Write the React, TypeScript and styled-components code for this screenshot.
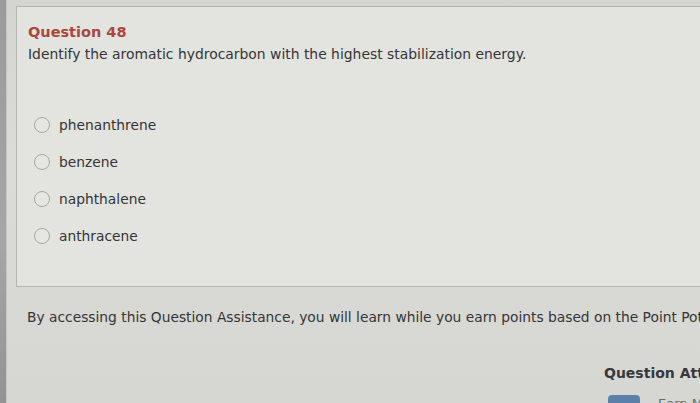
import React from 'react';
import styled, { createGlobalStyle } from 'styled-components';

const GlobalStyle = createGlobalStyle`
  html, body {
    margin: 0;
    padding: 0;
    overflow: hidden;
    background: #d9d9d6;
  }
  body {
    font-family: "DejaVu Sans", Verdana, sans-serif;
  }
`;

const Screen = styled.div`
  display: flex;
  width: 700px;
  height: 403px;
  overflow: hidden;
  background: linear-gradient(180deg, #d4d4d1 0%, #dbdbd8 40%, #d6d6d3 100%);
`;

const Rail = styled.div`
  width: 6px;
  flex-shrink: 0;
  background: linear-gradient(180deg, #9a9a98 0%, #a6a6a4 60%, #939391 100%);
  border-right: 1px solid #c4c4c2;
`;

const Main = styled.div`
  flex: 1;
  min-width: 0;
  display: flex;
  flex-direction: column;
  padding-top: 6px;
`;

const Card = styled.div`
  margin-left: 9px;
  width: 900px;
  height: 281px;
  flex-shrink: 0;
  box-sizing: border-box;
  border: 1px solid #b5b5b2;
  border-right: none;
  background: #e3e3e0;
  padding: 16px 0 0 11px;
`;

const Title = styled.div`
  color: #ac463d;
  font-weight: bold;
  font-size: 14.5px;
  line-height: 18px;
`;

const Prompt = styled.div`
  color: #353535;
  font-size: 13.9px;
  line-height: 18px;
  margin-top: 4px;
`;

const Options = styled.div`
  display: flex;
  flex-direction: column;
  gap: 19px;
  margin-top: 53px;
  padding-left: 6px;
`;

const Option = styled.label`
  display: flex;
  align-items: center;
  gap: 9px;
  color: #353535;
  font-size: 13.8px;
  line-height: 18px;
`;

const Radio = styled.span`
  width: 14px;
  height: 14px;
  border-radius: 50%;
  border: 1.5px solid #a6a6a3;
  background: #e6e6e3;
  flex-shrink: 0;
`;

const Assist = styled.div`
  color: #353535;
  font-size: 13.8px;
  line-height: 18px;
  white-space: nowrap;
  margin: 21px 0 0 20px;
`;

const AttemptsRow = styled.div`
  display: flex;
  flex-direction: column;
  align-items: flex-start;
  padding-left: 597px;
  margin-top: 38px;
  white-space: nowrap;
`;

const AttemptsTitle = styled.div`
  color: #383838;
  font-weight: bold;
  font-size: 14px;
  line-height: 18px;
`;

const EarnRow = styled.div`
  display: flex;
  align-items: flex-start;
  gap: 18px;
  margin-top: 13px;
  margin-left: 4px;
`;

const EarnButton = styled.span`
  width: 32px;
  height: 10px;
  border-radius: 4px 4px 0 0;
  background: #5a7fa8;
`;

const EarnText = styled.span`
  color: #6a6a6a;
  font-size: 13px;
  line-height: 14px;
  margin-top: 2px;
`;

const options = ['phenanthrene', 'benzene', 'naphthalene', 'anthracene'];

const App: React.FC = () => {
  return (
    <>
      <GlobalStyle />
      <Screen>
        <Rail />
        <Main>
          <Card>
            <Title>Question 48</Title>
            <Prompt>Identify the aromatic hydrocarbon with the highest stabilization energy.</Prompt>
            <Options>
              {options.map((o) => (
                <Option key={o}>
                  <Radio />
                  {o}
                </Option>
              ))}
            </Options>
          </Card>
          <Assist>
            By accessing this Question Assistance, you will learn while you earn points based on the Point Potential Policy set by your instructor.
          </Assist>
          <AttemptsRow>
            <AttemptsTitle>Question Attempts: Unlimited</AttemptsTitle>
            <EarnRow>
              <EarnButton />
              <EarnText>Earn Maximum Points available only if you answer this question correctly in your first attempt.</EarnText>
            </EarnRow>
          </AttemptsRow>
        </Main>
      </Screen>
    </>
  );
};

export default App;
